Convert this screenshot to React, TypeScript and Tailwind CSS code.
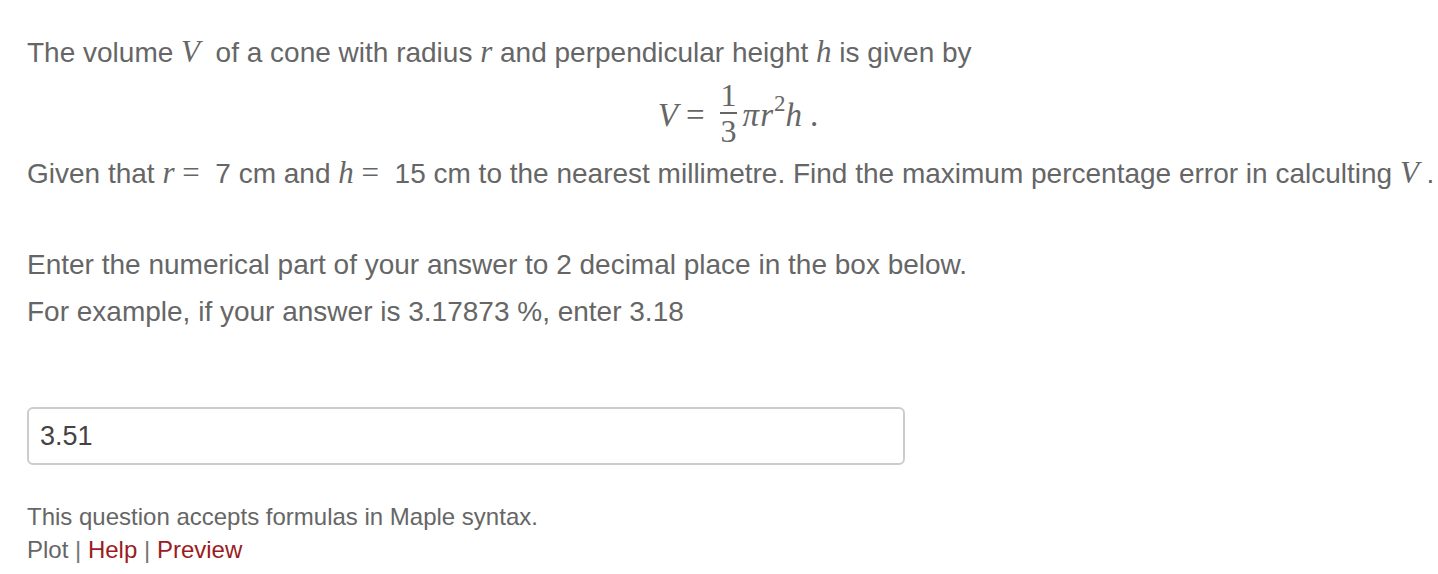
import React from "react";

const mathFont = "font-['Liberation_Serif',serif] italic";

function Frac({ num, den }: { num: string; den: string }) {
  return (
    <span className="mx-[4px] inline-flex flex-col items-center font-['Liberation_Serif',serif] not-italic text-[32px] leading-none">
      <span className="px-[2px] pb-[1px]">{num}</span>
      <span className="h-[2px] w-[17px] bg-[#666]" />
      <span className="px-[2px] pt-[1px]">{den}</span>
    </span>
  );
}

export default function App() {
  return (
    <div className="bg-white pl-[27px] pb-[8px] font-['Liberation_Sans',Arial,sans-serif] text-[#666]">
      <div className="w-[1422px]">
        <p className="mt-[32px] whitespace-nowrap text-[28px] leading-[40px]">
          The volume <span className={`${mathFont} text-[31px]`}>V</span>&nbsp; of a cone with radius{" "}
          <span className={`${mathFont} text-[31px]`}>r</span> and perpendicular height{" "}
          <span className={`${mathFont} text-[31px]`}>h</span> is given by
        </p>

        <div className="flex h-[80px] items-center justify-center text-[33px] leading-none">
          <span className={`${mathFont} mt-[4px]`}>V</span>
          <span className="mt-[4px] ml-[8px] mr-[10px] font-['Liberation_Serif',serif]">=</span>
          <Frac num="1" den="3" />
          <span className={`${mathFont} mt-[4px] flex items-start`}>
            <span>π</span>
            <span className="ml-[1px]">r</span>
            <span className="relative -top-[7px] ml-[1px] text-[23px] leading-none not-italic">2</span>
            <span>h</span>
          </span>
          <span className="mt-[4px] ml-[8px] font-['Liberation_Serif',serif]">.</span>
        </div>

        <p className="whitespace-nowrap text-[28px] leading-[40px]">
          Given that <span className={`${mathFont} text-[31px]`}>r</span>{" "}
          <span className="font-['Liberation_Serif',serif] text-[31px]">=</span>&nbsp; 7 cm and{" "}
          <span className={`${mathFont} text-[31px]`}>h</span>{" "}
          <span className="font-['Liberation_Serif',serif] text-[31px]">=</span>&nbsp; 15 cm to the nearest
          millimetre. Find the maximum percentage error in calculting{" "}
          <span className={`${mathFont} text-[31px]`}>V</span> .
        </p>

        <div className="mt-[47px] whitespace-nowrap text-[28px] leading-[47px]">
          <p>Enter the numerical part of your answer to 2 decimal place in the box below.</p>
          <p>For example, if your answer is 3.17873 %, enter 3.18</p>
        </div>

        <input
          type="text"
          defaultValue="3.51"
          className="mt-[72px] block h-[58px] w-[878px] rounded-[6px] border-2 border-[#ccc] bg-white px-[11px] text-[27px] text-[#444] outline-none"
        />

        <div className="mt-[35px] text-[24px] leading-[33px]">
          <p>This question accepts formulas in Maple syntax.</p>
          <p>
            Plot <span className="text-[#777]">|</span>{" "}
            <a href="#" className="text-[#9b1b22]">Help</a>{" "}
            <span className="text-[#777]">|</span>{" "}
            <a href="#" className="text-[#9b1b22]">Preview</a>
          </p>
        </div>
      </div>
    </div>
  );
}
